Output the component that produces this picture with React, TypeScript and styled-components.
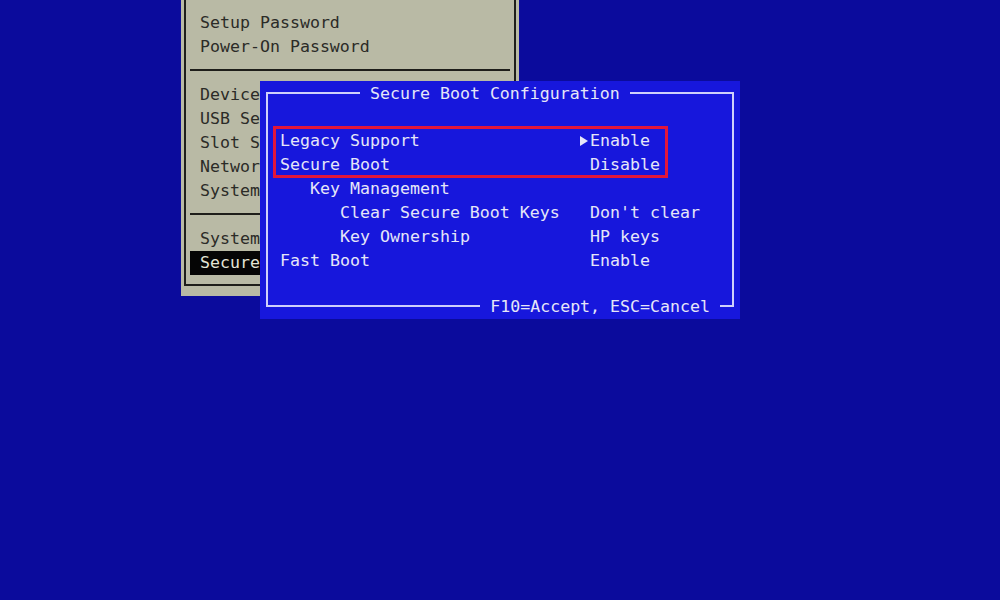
import styled, { createGlobalStyle } from "styled-components";

// BIOS text-mode colours
const colors = {
  screen: "#0b0b9c",
  dialog: "#1717dc",
  frame: "#cfd0fb",
  dialogText: "#e6e6f8",
  panel: "#b9baa5",
  panelText: "#2b2b27",
  panelLine: "#1e1e1a",
  selected: "#050505",
  selectedText: "#e4e4d6",
  marker: "#e2163a",
};

const GlobalStyle = createGlobalStyle`
  html, body {
    margin: 0;
    padding: 0;
    background: ${colors.screen};
    overflow: hidden;
  }
  body {
    font-family: "DejaVu Sans Mono", "Liberation Mono", monospace;
    font-size: 16.6px;
  }
`;

const Screen = styled.div`
  position: relative;
  width: 1000px;
  height: 600px;
  overflow: hidden;
  background: ${colors.screen};
`;

// === Security menu behind the dialog ===
const MenuPanel = styled.div`
  width: 338px;
  margin: -40px 0 0 181px;
  padding: 0 3px 10px 3px;
  box-sizing: border-box;
  background: ${colors.panel};
`;

const MenuFrame = styled.div`
  border: 2px solid ${colors.panelLine};
  border-top: none;
  padding: 51px 4px 9px 4px;
`;

const MenuItem = styled.div<{ $selected?: boolean }>`
  height: 24px;
  line-height: 24px;
  padding-left: 10px;
  white-space: nowrap;
  overflow: hidden;
  color: ${({ $selected }) => ($selected ? colors.selectedText : colors.panelText)};
  background: ${({ $selected }) => ($selected ? colors.selected : "transparent")};
`;

const MenuSeparator = styled.div`
  height: 24px;
  display: flex;
  align-items: center;

  &::before {
    content: "";
    flex: 1;
    height: 2px;
    margin-top: -3px;
    background: ${colors.panelLine};
  }
`;

// === Secure Boot Configuration dialog ===
const Dialog = styled.div`
  position: absolute;
  left: 260px;
  top: 81px;
  width: 480px;
  height: 238px;
  box-sizing: border-box;
  padding: 11px 6px 12px 6px;
  background: ${colors.dialog};
  color: ${colors.dialogText};
`;

const DialogFrame = styled.div`
  position: relative;
  height: 100%;
  box-sizing: border-box;
  border: 2px solid ${colors.frame};
  padding: 35px 12px 0 12px;
`;

const FrameLabel = styled.div<{ $bottom?: boolean }>`
  position: absolute;
  height: 24px;
  line-height: 24px;
  padding: 0 10px;
  background: ${colors.dialog};
  white-space: nowrap;
  ${({ $bottom }) =>
    $bottom ? "right: 12px; bottom: -14px;" : "left: 92px; top: -12px;"}
`;

const HighlightGroup = styled.div`
  position: relative;

  &::after {
    content: "";
    position: absolute;
    left: -7px;
    top: -3px;
    width: 395px;
    height: 52px;
    box-sizing: border-box;
    border: 3px solid ${colors.marker};
  }
`;

const SettingRow = styled.div`
  display: grid;
  grid-template-columns: 300px 10px 1fr;
  height: 24px;
  line-height: 24px;
  white-space: nowrap;
`;

const SettingLabel = styled.span<{ $level: number }>`
  padding-left: ${({ $level }) => $level * 30}px;
`;

const Cursor = styled.span`
  display: flex;
  align-items: center;

  &::before {
    content: "";
    width: 0;
    height: 0;
    margin-top: -1px;
    border-top: 5px solid transparent;
    border-bottom: 5px solid transparent;
    border-left: 8px solid ${colors.dialogText};
  }
`;

type Setting = { label: string; value?: string; level: number; active?: boolean };

const securityMenu: (string | null)[] = [
  "Setup Password",
  "Power-On Password",
  null,
  "Device Security",
  "USB Security",
  "Slot Security",
  "Network Boot",
  "System IDs",
  null,
  "System Security",
  "Secure Boot Configuration",
];

const highlighted: Setting[] = [
  { label: "Legacy Support", value: "Enable", level: 0, active: true },
  { label: "Secure Boot", value: "Disable", level: 0 },
];

const others: Setting[] = [
  { label: "Key Management", level: 1 },
  { label: "Clear Secure Boot Keys", value: "Don't clear", level: 2 },
  { label: "Key Ownership", value: "HP keys", level: 2 },
  { label: "Fast Boot", value: "Enable", level: 0 },
];

function SettingLine({ item }: { item: Setting }) {
  return (
    <SettingRow>
      <SettingLabel $level={item.level}>{item.label}</SettingLabel>
      {item.active ? <Cursor /> : <span />}
      <span>{item.value ?? ""}</span>
    </SettingRow>
  );
}

export default function App() {
  return (
    <Screen>
      <GlobalStyle />
      <MenuPanel>
        <MenuFrame>
          {securityMenu.map((item, i) =>
            item === null ? (
              <MenuSeparator key={i} />
            ) : (
              <MenuItem key={i} $selected={i === securityMenu.length - 1}>
                {item}
              </MenuItem>
            )
          )}
        </MenuFrame>
      </MenuPanel>

      <Dialog>
        <DialogFrame>
          <FrameLabel>Secure Boot Configuration</FrameLabel>
          <HighlightGroup>
            {highlighted.map((item) => (
              <SettingLine key={item.label} item={item} />
            ))}
          </HighlightGroup>
          {others.map((item) => (
            <SettingLine key={item.label} item={item} />
          ))}
          <FrameLabel $bottom>F10=Accept, ESC=Cancel</FrameLabel>
        </DialogFrame>
      </Dialog>
    </Screen>
  );
}
